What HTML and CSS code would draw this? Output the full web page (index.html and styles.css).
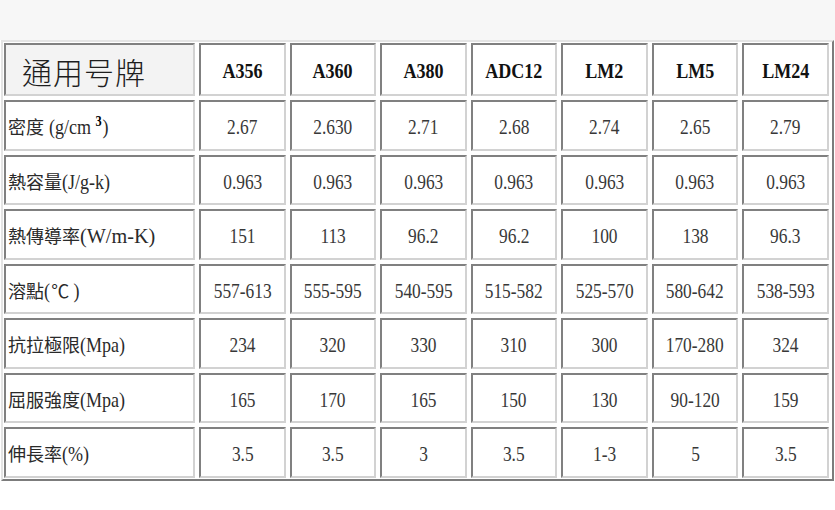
FILE: index.html
```html
<!DOCTYPE html>
<html lang="zh-Hant">
<head>
<meta charset="utf-8">
<title>通用号牌</title>
<link rel="stylesheet" href="styles.css">
</head>
<body>
<div class="topband"></div>
<div class="spec" role="table">
  <div class="cell head-title" role="columnheader">通用号牌</div>
  <div class="cell head" role="columnheader"><span class="t">A356</span></div>
  <div class="cell head" role="columnheader"><span class="t">A360</span></div>
  <div class="cell head" role="columnheader"><span class="t">A380</span></div>
  <div class="cell head" role="columnheader"><span class="t">ADC12</span></div>
  <div class="cell head" role="columnheader"><span class="t">LM2</span></div>
  <div class="cell head" role="columnheader"><span class="t">LM5</span></div>
  <div class="cell head" role="columnheader"><span class="t">LM24</span></div>

  <div class="cell label"><span class="lt">密度 <span class="l">(g/cm <sup class="sup">3</sup>)</span></span></div>
  <div class="cell val"><span class="t">2.67</span></div><div class="cell val"><span class="t">2.630</span></div><div class="cell val"><span class="t">2.71</span></div><div class="cell val"><span class="t">2.68</span></div><div class="cell val"><span class="t">2.74</span></div><div class="cell val"><span class="t">2.65</span></div><div class="cell val"><span class="t">2.79</span></div>

  <div class="cell label"><span class="lt">熱容量<span class="l">(J/g-k)</span></span></div>
  <div class="cell val"><span class="t">0.963</span></div><div class="cell val"><span class="t">0.963</span></div><div class="cell val"><span class="t">0.963</span></div><div class="cell val"><span class="t">0.963</span></div><div class="cell val"><span class="t">0.963</span></div><div class="cell val"><span class="t">0.963</span></div><div class="cell val"><span class="t">0.963</span></div>

  <div class="cell label"><span class="lt">熱傳導率<span class="l wide">(W/m-K)</span></span></div>
  <div class="cell val"><span class="t">151</span></div><div class="cell val"><span class="t">113</span></div><div class="cell val"><span class="t">96.2</span></div><div class="cell val"><span class="t">96.2</span></div><div class="cell val"><span class="t">100</span></div><div class="cell val"><span class="t">138</span></div><div class="cell val"><span class="t">96.3</span></div>

  <div class="cell label"><span class="lt">溶點<span class="l">(</span>℃<span class="l">&nbsp;)</span></span></div>
  <div class="cell val"><span class="t">557-613</span></div><div class="cell val"><span class="t">555-595</span></div><div class="cell val"><span class="t">540-595</span></div><div class="cell val"><span class="t">515-582</span></div><div class="cell val"><span class="t">525-570</span></div><div class="cell val"><span class="t">580-642</span></div><div class="cell val"><span class="t">538-593</span></div>

  <div class="cell label"><span class="lt">抗拉極限<span class="l">(Mpa)</span></span></div>
  <div class="cell val"><span class="t">234</span></div><div class="cell val"><span class="t">320</span></div><div class="cell val"><span class="t">330</span></div><div class="cell val"><span class="t">310</span></div><div class="cell val"><span class="t">300</span></div><div class="cell val"><span class="t">170-280</span></div><div class="cell val"><span class="t">324</span></div>

  <div class="cell label"><span class="lt">屈服強度<span class="l">(Mpa)</span></span></div>
  <div class="cell val"><span class="t">165</span></div><div class="cell val"><span class="t">170</span></div><div class="cell val"><span class="t">165</span></div><div class="cell val"><span class="t">150</span></div><div class="cell val"><span class="t">130</span></div><div class="cell val"><span class="t">90-120</span></div><div class="cell val"><span class="t">159</span></div>

  <div class="cell label"><span class="lt">伸長率<span class="l">(%)</span></span></div>
  <div class="cell val"><span class="t">3.5</span></div><div class="cell val"><span class="t">3.5</span></div><div class="cell val"><span class="t">3</span></div><div class="cell val"><span class="t">3.5</span></div><div class="cell val"><span class="t">1-3</span></div><div class="cell val"><span class="t">5</span></div><div class="cell val"><span class="t">3.5</span></div>
</div>
</body>
</html>
```

FILE: styles.css
```css
html, body {
  margin: 0;
  padding: 0;
  background: #ffffff;
}

body {
  font-family: "Liberation Serif", "Noto Sans CJK TC", serif;
  color: #333333;
}

.topband {
  height: 40px;
  background: #f7f7f7;
}

.spec {
  box-sizing: border-box;
  width: 833px;
  margin-left: 1px;
  border: 2px solid;
  border-color: #e4e4e4 #7c7c7c #7c7c7c #e4e4e4;
  padding: 1px 3px 1px 1px;
  display: grid;
  grid-template-columns: 191px repeat(7, 1fr);
  grid-template-rows: 53px repeat(7, 50.5px);
  gap: 4px;
  background: #ffffff;
}

.cell {
  box-sizing: border-box;
  border: 2px solid;
  border-color: #808080 #d2d2d2 #d2d2d2 #808080;
  display: flex;
  align-items: center;
  font-size: 18px;
  line-height: 1;
  white-space: nowrap;
}

/* tall, narrow Latin text as in the original rendering */
.t {
  display: inline-block;
  font-size: 22px;
  transform: scaleX(0.79);
  transform-origin: center;
}

.lt {
  display: block;
}

.l {
  display: inline-block;
  font-size: 22px;
  transform: scaleX(0.82);
  transform-origin: left center;
}

.l.wide {
  transform: scaleX(0.92);
}

.head-title {
  background: #f3f3f3;
  padding-left: 16px;
  padding-top: 2px;
  font-family: "Noto Sans CJK TC", sans-serif;
  font-size: 30px;
  font-weight: 300;
  letter-spacing: 1px;
  color: #1e1e1e;
}

.head {
  justify-content: center;
  font-weight: bold;
  color: #111111;
  padding-top: 2px;
}

.head .t {
  transform: scaleX(0.82);
}

.label {
  padding-left: 2px;
  padding-top: 4px;
  color: #2a2a2a;
}

.val {
  justify-content: center;
  padding-top: 4px;
  color: #383838;
}

.sup {
  font-size: 15px;
  font-weight: bold;
  color: #000000;
  vertical-align: 8px;
  line-height: 0;
  margin-right: 1px;
}
```
